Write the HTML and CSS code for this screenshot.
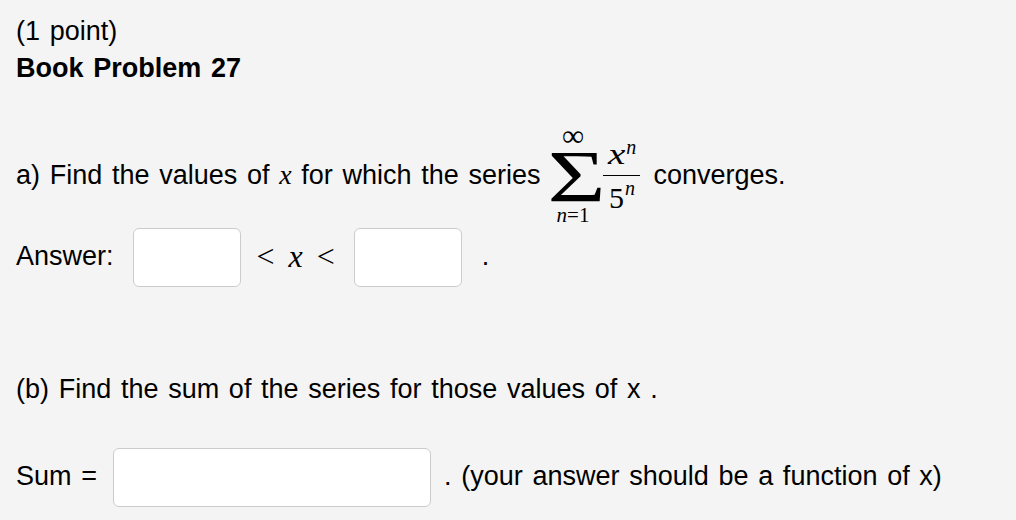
FILE: index.html
```html
<!DOCTYPE html>
<html>
<head>
<meta charset="utf-8">
<link rel="stylesheet" href="styles.css">
</head>
<body>
<div class="page">
  <div class="head">
    <div class="pts">(1 point)</div>
    <div class="title">Book Problem 27</div>
  </div>

  <div class="row qa">
    <span class="txt">a) Find the values of <i class="mv">x</i> for which the series</span>
    <span class="sigma">
      <span class="lim-top">∞</span>
      <span class="big"><span class="bigg">Σ</span></span>
      <span class="lim-bot"><i>n</i>=1</span>
    </span>
    <span class="frac">
      <span class="num"><i class="wx">x</i><sup class="s1"><i>n</i></sup></span>
      <span class="den">5<sup class="s2"><i>n</i></sup></span>
    </span>
    <span class="txt conv">converges.</span>
  </div>

  <div class="row ans">
    <span class="txt">Answer:</span>
    <span class="box small b1"></span>
    <span class="ineq">&lt; <i>x</i> &lt;</span>
    <span class="box small b2"></span>
    <span class="txt dot">.</span>
  </div>

  <div class="qb">(b) Find the sum of the series for those values of x .</div>

  <div class="row sumrow">
    <span class="txt">Sum =</span>
    <span class="box wide"></span>
    <span class="txt after">. (your answer should be a function of x)</span>
  </div>
</div>
</body>
</html>
```

FILE: styles.css
```css
html, body {
  margin: 0;
  padding: 0;
  background: #f4f4f4;
}
body {
  font-family: "Liberation Sans", Arial, sans-serif;
  font-size: 27px;
  word-spacing: 2.2px;
  color: #000;
  width: 1016px;
  height: 520px;
  overflow: hidden;
}
.page {
  padding: 13px 0 0 16px;
}
.head {
  line-height: 37px;
}
.title {
  font-weight: bold;
}
.row {
  display: flex;
  align-items: center;
  white-space: nowrap;
}
.qa {
  margin-top: 38px;
  height: 100px;
}
.mv {
  font-family: "Liberation Serif", "Times New Roman", serif;
  font-size: 28px;
}
.sigma {
  display: inline-flex;
  flex-direction: column;
  align-items: center;
  width: 39px;
  font-family: "Liberation Serif", "Times New Roman", serif;
  margin-left: 13px;
  margin-bottom: 3px;
  word-spacing: 0;
}
.lim-top {
  font-size: 31px;
  line-height: 14px;
}
.big {
  font-size: 74px;
  line-height: 69px;
  height: 69px;
}
.bigg {
  display: inline-block;
  transform: translateX(4px) scaleX(1.35);
}
.lim-bot {
  font-size: 21px;
  line-height: 7px;
  height: 7px;
}
.frac {
  display: inline-flex;
  flex-direction: column;
  align-items: center;
  font-family: "Liberation Serif", "Times New Roman", serif;
  font-size: 30px;
  margin-left: 11px;
}
.wx {
  display: inline-block;
  transform: scaleX(1.3);
  margin: 0 2px;
}
.frac sup {
  font-size: 20px;
  line-height: 0;
  margin-left: 1px;
}
.s1 {
  vertical-align: 10px;
}
.s2 {
  vertical-align: 13px;
}
.num {
  line-height: 43px;
  height: 43px;
  border-bottom: 1.5px solid #000;
  width: 37px;
  text-align: center;
}
.den {
  line-height: 43px;
  height: 43px;
  width: 37px;
  text-align: center;
}
.conv {
  margin-left: 13px;
}
.ans {
  margin-top: 3px;
  height: 59px;
}
.box {
  display: inline-block;
  box-sizing: border-box;
  height: 59px;
  background: #fff;
  border: 1.5px solid #cccccc;
  border-radius: 6px;
}
.small {
  width: 108px;
}
.ans .txt {
  margin-bottom: 3px;
}
.b1 {
  margin-left: 19px;
}
.ineq {
  font-family: "Liberation Serif", "Times New Roman", serif;
  font-size: 32px;
  margin-left: 16px;
  margin-right: 19px;
  margin-bottom: 3px;
  word-spacing: 6px;
}
.dot {
  margin-left: 20px;
}
.qb {
  margin-top: 87px;
  line-height: 30px;
}
.sumrow {
  margin-top: 44px;
  height: 59px;
}
.sumrow .txt {
  margin-bottom: 3px;
}
.sumrow .box {
  margin-left: 16px;
}
.wide {
  width: 318px;
}
.after {
  margin-left: 13px;
}
```
